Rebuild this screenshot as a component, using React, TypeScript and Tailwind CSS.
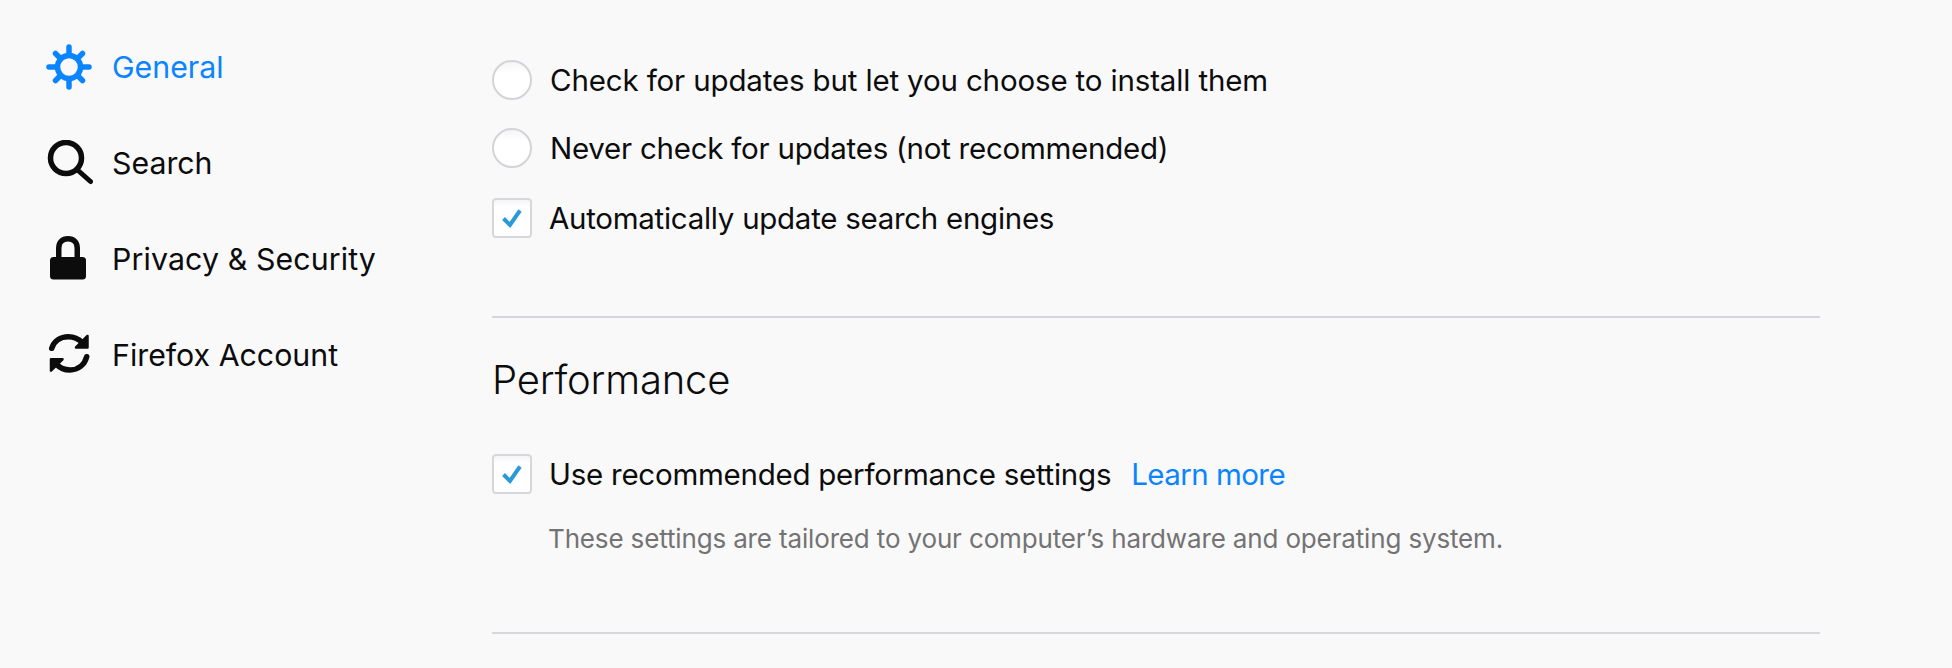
const Gear = () => (
  <svg width="46" height="46" viewBox="0 0 46 46" className="shrink-0">
    <g stroke="#0a84ff" strokeWidth="5.5" strokeLinecap="round">
      <path d="M23 3V9M23 37V43M3 23H9M37 23H43M9.5 9.5L13 13M33 33L36.5 36.5M9.5 36.5L13 33M33 13L36.5 9.5" />
    </g>
    <circle cx="23" cy="23" r="11.5" fill="none" stroke="#0a84ff" strokeWidth="5.5" />
  </svg>
);

const SearchIcon = () => (
  <svg width="47" height="46" viewBox="0 0 47 46" className="shrink-0">
    <circle cx="20" cy="18" r="15.5" fill="none" stroke="#0c0c0d" strokeWidth="5.5" />
    <path d="M31 29.5L44.5 41.5" stroke="#0c0c0d" strokeWidth="5" strokeLinecap="round" />
  </svg>
);

const LockIcon = () => (
  <svg width="46" height="46" viewBox="0 0 46 46" className="shrink-0">
    <path d="M12.75 23V12C12.75 6 16.5 2.75 22 2.75S31.25 6 31.25 12V23" fill="none" stroke="#0c0c0d" strokeWidth="5.5" />
    <rect x="4" y="21" width="36" height="22.5" rx="3.5" fill="#0c0c0d" />
  </svg>
);

const SyncIcon = () => (
  <svg width="46" height="46" viewBox="0 0 46 46" className="shrink-0">
    <g fill="none" stroke="#0c0c0d" strokeWidth="5.5" strokeLinecap="round" strokeLinejoin="round">
      <path d="M5.7 16.3C8 9 14.5 4.7 22.3 4.7C28 4.7 32.5 6.7 36 10.5" />
      <path d="M40.7 24.7C38.5 33 32 38 24 38C18.5 38 14 36 10.7 32.5" />
    </g>
    <path d="M41.5 4V15.5H30Z" fill="#0c0c0d" stroke="#0c0c0d" strokeWidth="2.5" strokeLinejoin="round" />
    <path d="M5 38.7V27.3H16.5Z" fill="#0c0c0d" stroke="#0c0c0d" strokeWidth="2.5" strokeLinejoin="round" />
  </svg>
);

const Radio = () => (
  <span className="block w-10 h-10 shrink-0 rounded-full border-2 border-[#d3d3d8] bg-gradient-to-b from-[#f5f5f6] to-white to-[30%]" />
);

const Check = () => (
  <span className="flex items-center justify-center w-10 h-10 shrink-0 rounded-[4px] border-2 border-[#d7d7db] bg-gradient-to-b from-[#f5f5f6] to-white to-[20%]">
    <svg width="22" height="22" viewBox="0 0 22 22">
      <path d="M2.5 11.5L9 18L19 3.5" fill="none" stroke="#2a9ad6" strokeWidth="4" />
    </svg>
  </span>
);

const items = [
  { icon: <Gear />, label: "General", active: true, extra: "" },
  { icon: <SearchIcon />, label: "Search", active: false, extra: "" },
  { icon: <LockIcon />, label: "Privacy & Security", active: false, extra: "tracking-[0.12px]" },
  { icon: <SyncIcon />, label: "Firefox Account", active: false, extra: "" },
];

export default function App() {
  return (
    <div className="flex w-[1952px] h-[668px] overflow-hidden bg-[#f9f9fa] text-[#0c0c0d] font-['Inter','Liberation_Sans',sans-serif]">
      <aside className="w-[492px] shrink-0 pl-[46px] pt-[19px] text-[30.3px]">
        {items.map((it) => (
          <div key={it.label} className="flex items-center h-[96px]">
            <span className="w-[66px] shrink-0">{it.icon}</span>
            <span className={`leading-[46px] ${it.active ? "text-[#0a84ff]" : ""} ${it.extra}`}>{it.label}</span>
          </div>
        ))}
      </aside>
      <main className="w-[1328px] shrink-0 pt-[60px] text-[29.5px] tracking-[-0.25px]">
        <div className="flex items-center gap-[18px] h-10">
          <Radio />
          <span className="tracking-[-0.15px]">Check for updates but let you choose to install them</span>
        </div>
        <div className="flex items-center gap-[18px] h-10 mt-[28px]">
          <Radio />
          <span>Never check for updates (not recommended)</span>
        </div>
        <div className="flex items-center gap-[17px] h-10 mt-[30px]">
          <Check />
          <span className="tracking-[-0.28px]">Automatically update search engines</span>
        </div>
        <div className="h-[2px] bg-[#d7d7db] mt-[78px]" />
        <h2 className="text-[40px] font-light leading-[48px] tracking-[-0.2px] mt-[38px]">Performance</h2>
        <div className="flex items-center gap-[17px] h-10 mt-[50px]">
          <Check />
          <span>Use recommended performance settings</span>
          <span className="text-[#0a84ff] ml-[3px] tracking-[-0.55px]">Learn more</span>
        </div>
        <p className="text-[26px] text-[#737373] leading-[32px] tracking-[-0.15px] ml-[56px] mt-[29px]">
          These settings are tailored to your computer’s hardware and operating system.
        </p>
        <div className="h-[2px] bg-[#d7d7db] mt-[77px]" />
      </main>
    </div>
  );
}
